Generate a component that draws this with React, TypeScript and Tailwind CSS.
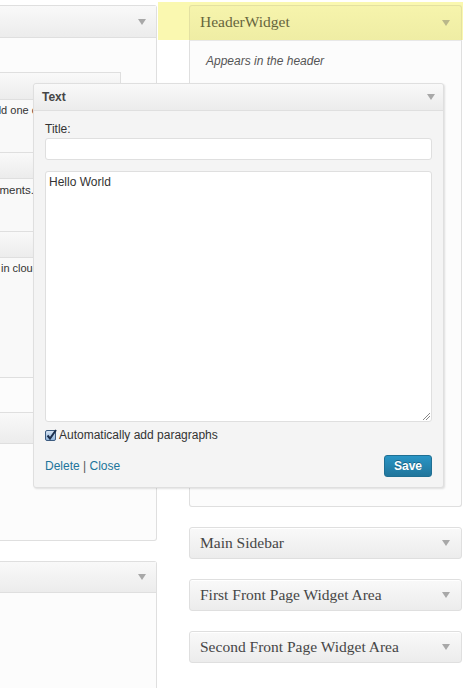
import React from "react";

const Tri = ({ color = "#a8a8a8" }: { color?: string }) => (
  <svg width="8" height="6" viewBox="0 0 8 6" className="shrink-0">
    <polygon points="0,0 8,0 4,6" fill={color} />
  </svg>
);

const grad = "bg-[linear-gradient(to_bottom,#f9f9f9,#ececec)]";

function SerifBar({ title }: { title: string }) {
  return (
    <div
      className={`h-[32px] border border-[#dfdfdf] rounded-[3px] ${grad} flex items-center justify-between pl-[10px] pr-[11px] shadow-[0_1px_0_#fff_inset]`}
    >
      <span className="font-['Liberation_Serif',Georgia,serif] text-[15.5px] text-[#464646] leading-none">
        {title}
      </span>
      <Tri />
    </div>
  );
}

function AvailHeader({ h }: { h: string }) {
  return <div className={`${h} border-b border-[#dfdfdf] ${grad}`} />;
}

export default function App() {
  return (
    <div className="relative w-[474px] h-[688px] overflow-hidden bg-white font-['Liberation_Sans',Arial,sans-serif] text-[#333]">
      <div className="flex gap-[32px] pt-[5px]">
        {/* Left column */}
        <div className="w-[157px] shrink-0 flex flex-col gap-[20px]">
          <div className="h-[536px] border border-l-0 border-[#dfdfdf] rounded-r-[3px] bg-[#fcfcfc] flex flex-col">
            <div className={`h-[32px] border-b border-[#dfdfdf] ${grad} flex items-center justify-end pr-[10px]`}>
              <Tri />
            </div>
            <div className="pt-[34px] pr-[35px] flex flex-col">
              <div className="border-t border-r border-[#dfdfdf] bg-[#f9f9f9]">
                <AvailHeader h="h-[27px]" />
                <div className="h-[52px] pt-[4px] text-[11px] leading-[13px] whitespace-nowrap -ml-[101px]">
                  Use this widget to add one of your custom menus as a widget.
                </div>
              </div>
              <div className="border-t border-r border-[#dfdfdf] bg-[#f9f9f9]">
                <AvailHeader h="h-[26px]" />
                <div className="h-[52px] pt-[5px] text-[11.5px] leading-[13px] whitespace-nowrap -ml-[141px]">
                  Your site&apos;s most recent comments.
                </div>
              </div>
              <div className="border-t border-b border-r border-[#dfdfdf] bg-[#f9f9f9]">
                <AvailHeader h="h-[26px]" />
                <div className="h-[119px] pt-[4px] text-[11px] leading-[13px] whitespace-nowrap -ml-[102px]">
                  Your most used tags in cloud format.
                </div>
              </div>
              <div className="mt-[34px] border-t border-r border-[#dfdfdf]">
                <AvailHeader h="h-[31px]" />
              </div>
            </div>
          </div>
          <div className="h-[200px] border border-l-0 border-[#dfdfdf] rounded-tr-[3px] bg-[#fcfcfc]">
            <div className={`h-[31px] border-b border-[#dfdfdf] ${grad} flex items-center justify-end pr-[10px]`}>
              <Tri />
            </div>
          </div>
        </div>

        {/* Right column */}
        <div className="w-[273px] shrink-0 flex flex-col">
          <div className="-ml-[31px] -mr-px -mt-[3px] pl-[31px] pr-px pt-[3px] bg-[#faf8b0]">
            <div className="h-[35px] border border-b-0 border-[#e4e1a2] rounded-t-[3px] bg-[linear-gradient(to_bottom,#f6f4ac,#efeda4)] flex items-center justify-between pl-[10px] pr-[11px]">
              <span className="font-['Liberation_Serif',Georgia,serif] text-[15.5px] text-[#66653d] leading-none -mt-[3px]">
                HeaderWidget
              </span>
              <Tri color="#b9b78a" />
            </div>
          </div>
          <div className="h-[467px] border border-t-[#e8e8e8] border-[#dfdfdf] rounded-b-[3px] bg-[#fcfcfc]">
            <p className="pl-[16px] pt-[13px] italic text-[12px] leading-[14px] text-[#555]">
              Appears in the header
            </p>
          </div>
          <div className="mt-[20px] flex flex-col gap-[20px]">
            <SerifBar title="Main Sidebar" />
            <SerifBar title="First Front Page Widget Area" />
            <SerifBar title="Second Front Page Widget Area" />
          </div>
        </div>
      </div>

      {/* Dragged Text widget */}
      <div className="absolute left-[33px] top-[83px] w-[411px] h-[405px] border border-[#dfdfdf] rounded-[3px] bg-[#f4f4f4] shadow-[1px_1px_2px_rgba(0,0,0,0.12)] flex flex-col">
        <div className={`h-[27px] border-b border-[#dfdfdf] ${grad} rounded-t-[3px] flex items-center justify-between pl-[8px] pr-[8px]`}>
          <span className="text-[12px] font-bold text-[#464646]">Text</span>
          <Tri />
        </div>
        <div className="flex flex-col px-[11px] pt-[11px]">
          <label className="text-[12px] leading-[14px] text-[#333]">Title:</label>
          <div className="mt-[2px] h-[22px] border border-[#dfdfdf] rounded-[3px] bg-white" />
          <div className="relative mt-[11px] h-[251px] border border-[#dfdfdf] rounded-[3px] bg-white px-[3px] pt-[3px] text-[12px] leading-[15px] text-[#333]">
            Hello World
            <svg width="8" height="8" viewBox="0 0 8 8" className="absolute right-[1px] bottom-[1px]">
              <line x1="1" y1="8" x2="8" y2="1" stroke="#888" strokeWidth="1" />
              <line x1="4" y1="8" x2="8" y2="4" stroke="#888" strokeWidth="1" />
            </svg>
          </div>
          <div className="mt-[6px] flex items-center gap-[2px] text-[12px] leading-[14px] text-[#333]">
            <svg width="12" height="12" viewBox="0 0 12 12" className="shrink-0">
              <defs>
                <linearGradient id="cb" x1="0" y1="0" x2="0" y2="1">
                  <stop offset="0" stopColor="#d9e6f4" />
                  <stop offset="1" stopColor="#8fb3db" />
                </linearGradient>
              </defs>
              <rect x="0.5" y="1.5" width="10" height="10" rx="1.5" fill="url(#cb)" stroke="#3d5c80" />
              <path d="M2.5 6.5 L5 9.5 L11 1" fill="none" stroke="#1b2f4d" strokeWidth="2" />
            </svg>
            <span>Automatically add paragraphs</span>
          </div>
          <div className="mt-[13px] flex items-center justify-between">
            <div className="text-[12px] leading-[14px]">
              <span className="text-[#21759b]">Delete</span>
              <span className="text-[#555]"> | </span>
              <span className="text-[#21759b]">Close</span>
            </div>
            <button className="h-[22px] w-[48px] rounded-[3px] border border-[#1f6f93] bg-[linear-gradient(to_bottom,#2a95c5,#21759b)] text-white text-[12px] font-bold leading-none [text-shadow:0_-1px_0_rgba(0,0,0,0.3)]">
              Save
            </button>
          </div>
        </div>
      </div>
    </div>
  );
}
